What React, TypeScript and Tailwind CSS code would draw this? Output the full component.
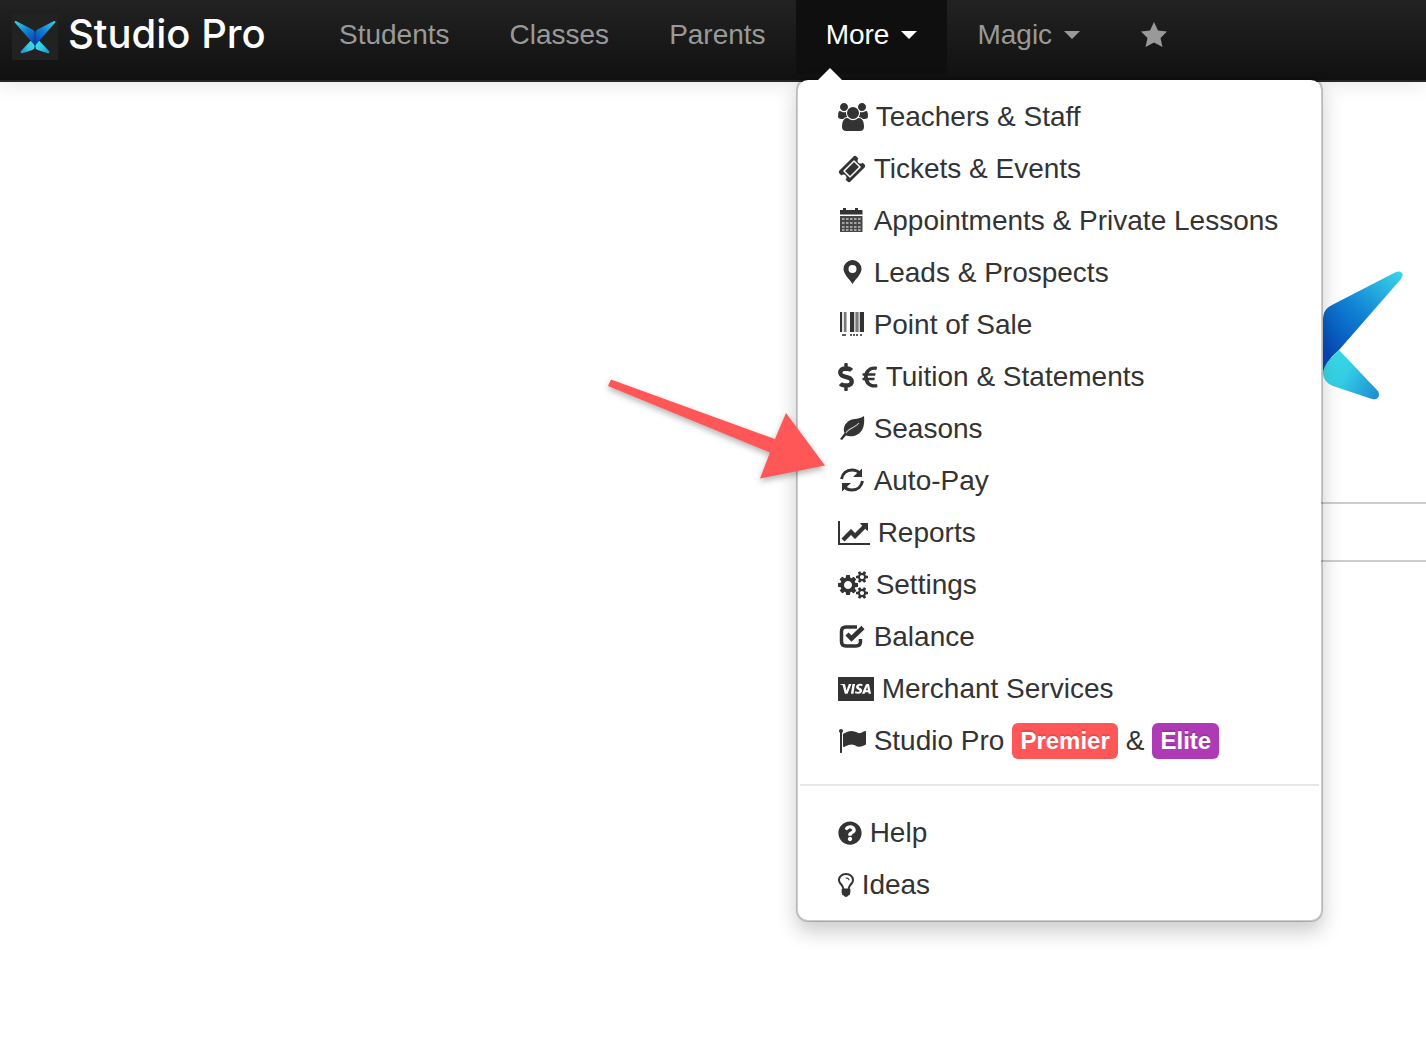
import type { ReactNode } from "react";
import { FaCcVisa, FaDollarSign, FaEuroSign, FaQuestionCircle } from "react-icons/fa";

function Glyph({ box, className, children }: { box: string; className: string; children: ReactNode }) {
  return (
    <svg viewBox={box} className={className} fill="currentColor" aria-hidden="true">
      {children}
    </svg>
  );
}

// Butterfly mark, used in the navbar and on the page itself
function Butterfly({ id, className }: { id: string; className: string }) {
  const wings = (
    <>
      <path
        d="M1 52C1 44 4 40 10 37L73 4.500Q77 2.500 79.500 4.500Q82 7 79 11L17 82Q2 94 1 108Z"
        fill={`url(#${id}-top)`}
      />
      <path
        d="M17 82L55 122Q58 125 56.500 129Q54.500 132 50 131L11 118Q1 114 1 104Q2 96 17 82Z"
        fill={`url(#${id}-bottom)`}
      />
    </>
  );
  return (
    <svg viewBox="-82 0 164 134" className={className} aria-hidden="true">
      <defs>
        <linearGradient id={`${id}-top`} gradientUnits="userSpaceOnUse" x1="6" y1="86" x2="80" y2="4">
          <stop offset="0" stopColor="#0648b8" />
          <stop offset="0.450" stopColor="#0f7fd2" />
          <stop offset="1" stopColor="#3bd6ea" />
        </linearGradient>
        <linearGradient id={`${id}-bottom`} gradientUnits="userSpaceOnUse" x1="10" y1="96" x2="60" y2="128">
          <stop offset="0" stopColor="#38d8e8" />
          <stop offset="0.300" stopColor="#34cce6" />
          <stop offset="1" stopColor="#1c86d0" />
        </linearGradient>
      </defs>
      {wings}
      <g transform="scale(-1 1)">{wings}</g>
    </svg>
  );
}

const smallCog =
  "M1664 1408q0-52-38-90t-90-38-90 38-38 90q0 53 37.500 90.500t90.500 37.500 90.500-37.500 37.500-90.500zm256-70v140q0 16-149 31-12 27-30 52 51 113 51 138 0 4-4 7-122 71-124 71-8 0-46-47t-52-68q-20 2-30 2t-30-2q-14 21-52 68t-46 47q-2 0-124-71-4-3-4-7 0-25 51-138-18-25-30-52-149-15-149-31v-140q0-16 149-31 13-29 30-52-51-113-51-138 0-4 4-7 4-2 35-20t59-34 30-16q8 0 46 46.500t52 67.500q20-2 30-2t30 2q51-71 92-112l6-2q4 0 124 70 4 3 4 7 0 25-51 138 17 23 30 52 149 15 149 31z";

const icons = {
  users: (
    <Glyph box="0 0 1920 1792" className="h-7 w-[30px]">
      <path d="M593 896q-162 5-265 128H194q-82 0-138-40.500T0 865q0-353 124-353 6 0 43.500 21t97.500 42.500T384 597q67 0 133-23-5 37-5 66 0 139 81 256zm1071 637q0 120-73 189.500t-194 69.500H523q-121 0-194-69.500T256 1533q0-53 3.500-103.500t14-109T300 1212t43-97.500 62-81 85.500-53.500T602 960q10 0 43 21.500t73 48 107 48 135 21.500 135-21.500 107-48 73-48 43-21.500q61 0 111.500 20t85.500 53.500 62 81 43 97.500 26.500 108.500 14 109 3.500 103.500zM640 256q0 106-75 181t-181 75-181-75-75-181 75-181T384 0t181 75 75 181zm704 384q0 159-112.500 271.500T960 1024 688.500 911.500 576 640t112.500-271.500T960 256t271.500 112.500T1344 640zm576 225q0 78-56 118.500t-138 40.500h-134q-103-123-265-128 81-117 81-256 0-29-5-66 66 23 133 23 59 0 119-21.500t97.500-42.500 43.500-21q124 0 124 353zm-128-609q0 106-75 181t-181 75-181-75-75-181 75-181 181-75 181 75 75 181z" />
    </Glyph>
  ),
  ticket: (
    <Glyph box="0 0 1792 1792" className="size-7">
      <path d="M1024 452l316 316-572 572-316-316zm-211 979l618-618q19-19 19-45t-19-45l-362-362q-18-18-45-18t-45 18L361 979q-19 19-19 45t19 45l362 362q18 18 45 18t45-18zm889-637l-907 908q-37 37-90.500 37t-90.500-37l-126-126q56-56 56-136t-56-136-136-56-136 56L91 1178q-37-37-37-90.500T91 997L998 91q37-37 90.500-37t90.500 37l125 125q-56 56-56 136t56 136 136 56 136-56l126 125q37 37 37 90.500t-37 90.500z" />
    </Glyph>
  ),
  calendar: (
    <Glyph box="0 0 28 28" className="size-7">
      <path d="M2 3h3V1h3v2h9V1h3v2h4.500v4.500H2z" />
      <path d="M2 9h22.500v16H2z" opacity="0.900" />
      <path
        d="M4 12h19M4 16h19M4 20h19M4 23h19"
        stroke="#fff"
        strokeWidth="2"
        strokeDasharray="2.500 1.500"
        opacity="0.500"
      />
    </Glyph>
  ),
  marker: (
    <Glyph box="0 0 28 28" className="size-7">
      <path
        fillRule="evenodd"
        d="M14.500 1a9 9 0 0 1 9 9c0 5-5 9-9 15c-4-6-9-10-9-15a9 9 0 0 1 9-9zm0 5a4 4 0 1 0 0 8 4 4 0 0 0 0-8z"
      />
    </Glyph>
  ),
  barcode: (
    <Glyph box="0 0 28 28" className="size-7">
      <path d="M2 1h2v20H2zM12 1h4v20h-4zM22 1h4v20h-4z" />
      <path d="M6 1h2.500v20H6zM17.500 1h3v20h-3z" opacity="0.650" />
      <path d="M4 23h4v2H4zM12 23h2v2h-2zM15 23h2v2h-2zM18 23h2v2h-2zM22 23h2v2h-2z" opacity="0.800" />
      <path d="M4.500 1h1v20h-1zM16 1h1.500v20H16zM20.500 1H22v20h-1.500z" opacity="0.250" />
    </Glyph>
  ),
  money: (
    <span className="flex items-center gap-2">
      <FaDollarSign className="h-7 w-4" />
      <FaEuroSign className="h-6 w-4" />
    </span>
  ),
  leaf: (
    <Glyph box="0 0 28 28" className="size-7">
      <path d="M26 1c.8 8-.5 14-5 17.500-4 3-9.500 3.500-13 2L4 25l-2-1 4.500-6C4.500 13.500 7 8 11.500 5.500 16 3 22 4.500 26 1z" />
      <path d="M8 18c2-4.500 9-5 13-10" stroke="#fff" strokeWidth="1.200" fill="none" opacity="0.700" />
    </Glyph>
  ),
  refresh: (
    <Glyph box="0 0 28 28" className="size-7">
      <path d="M3.500 12C4.500 6.500 8.500 3 14 3c4 0 6.500 1.500 8.500 4M24.500 14C23.500 19.500 19.500 23 14 23c-4 0-6.500-1.500-8.500-4" fill="none" stroke="currentColor" strokeWidth="3" />
      <path d="M24 1.500V10h-9zM4 24.500V16h9z" />
    </Glyph>
  ),
  chart: (
    <Glyph box="0 0 2048 1792" className="h-7 w-8">
      <path d="M2048 1536v128H0V128h128v1408h1920zM1920 288v435q0 21-19.500 29.500T1865 745l-121-121-633 633q-10 10-23 10t-23-10l-233-233-416 416-192-192 585-585q10-10 23-10t23 10l233 233 464-464-121-121q-16-16-7.500-35.500T1453 256h435q14 0 23 9t9 23z" />
    </Glyph>
  ),
  cogs: (
    <Glyph box="0 0 1920 1792" className="h-7 w-[30px]">
      <path d="M896 896q0-106-75-181t-181-75-181 75-75 181 75 181 181 75 181-75 75-181zm384-91v185q0 10-7 19.500t-16 10.500l-155 24q-11 35-32 76 34 48 90 115 7 11 7 20 0 12-7 19-23 30-82.500 89.500t-78.500 59.500q-11 0-21-7l-115-90q-37 19-77 31-11 108-23 155-7 24-30 24h-186q-11 0-20-7.500t-10-17.500l-23-153q-34-10-75-31l-118 89q-7 7-20 7-11 0-21-8-144-133-144-160 0-9 7-19 10-14 41-53t47-61q-23-44-35-82l-152-24q-10-1-17-9.500T0 987V802q0-10 7-19.500T23 772l155-24q11-35 32-76-34-48-90-115-7-11-7-20 0-12 7-20 22-30 82-89t79-59q11 0 21 7l115 90q34-18 77-32 11-108 23-154 7-24 30-24h186q11 0 20 7.500t10 17.500l23 153q34 10 75 31l118-89q8-7 20-7 11 0 21 8 144 133 144 160 0 8-7 19-12 16-42 54t-45 60q23 48 34 82l152 23q10 2 17 10.500t7 19.500z" />
      <path d={smallCog} />
      <path d={smallCog} transform="translate(0 -1024)" />
    </Glyph>
  ),
  check: (
    <Glyph box="0 0 28 28" className="size-7">
      <path d="M19 4H8Q3.500 4 3.500 8.500v10Q3.500 23 8 23h10q4.500 0 4.500-4.500V16" fill="none" stroke="currentColor" strokeWidth="3.500" />
      <path d="M9 11l4.500 4.500L25 4.500" fill="none" stroke="currentColor" strokeWidth="4.500" />
    </Glyph>
  ),
  flag: (
    <Glyph box="0 0 1792 1792" className="size-7">
      <path d="M320 256q0 72-64 110v1266q0 13-9.500 22.500T224 1664h-64q-13 0-22.500-9.500T128 1632V366q-64-38-64-110 0-53 37.500-90.500T192 128t90.500 37.500T320 256zm1472 64v763q0 25-12.500 38.500t-39.500 27.500q-215 116-369 116-61 0-123.500-22t-108.500-48-115.500-48-142.500-22q-192 0-464 146-17 9-33 9-26 0-45-19t-19-45V474q0-32 31-55 21-14 79-43 236-120 421-120 107 0 200 29t219 88q38 19 88 19 54 0 117.500-21t110-47 88-47 54.500-21q26 0 45 19t19 45z" />
    </Glyph>
  ),
  bulb: (
    <Glyph box="0 0 1024 1792" className="h-7 w-4">
      <path d="M736 576q0 13-9.500 22.500T704 608t-22.500-9.500T672 576q0-46-54-71t-106-25q-13 0-22.500-9.500T480 448t9.500-22.500T512 416q50 0 99.500 16t87 54 37.500 90zm160 0q0-72-34.500-134t-90-101.500-123-62T512 256t-136.500 22.500-123 62-90 101.500T128 576q0 101 68 180 10 11 30.500 33t30.500 33q128 153 141 298h228q13-145 141-298 10-11 30.500-33t30.500-33q68-79 68-180zm128 0q0 155-103 268-45 49-74.500 87t-59.500 95.500-34 107.500q47 28 47 82 0 37-25 64 25 27 25 64 0 52-45 81 13 23 13 47 0 46-31.500 71t-77.500 25q-20 44-60 70t-87 26-87-26-60-70q-46 0-77.500-25T256 1472q0-24 13-47-45-29-45-81 0-37 25-64-25-27-25-64 0-54 47-82-4-50-34-107.500T177.500 931 103 844Q0 731 0 576q0-99 44.500-184.500t117-142 164-89T512 128t186.500 32.500 164 89 117 142T1024 576z" />
    </Glyph>
  ),
};

const menuLinks = [
  { label: "Teachers & Staff", icon: icons.users },
  { label: "Tickets & Events", icon: icons.ticket },
  { label: "Appointments & Private Lessons", icon: icons.calendar },
  { label: "Leads & Prospects", icon: icons.marker },
  { label: "Point of Sale", icon: icons.barcode },
  { label: "Tuition & Statements", icon: icons.money },
  { label: "Seasons", icon: icons.leaf },
  { label: "Auto-Pay", icon: icons.refresh },
  { label: "Reports", icon: icons.chart },
  { label: "Settings", icon: icons.cogs },
  { label: "Balance", icon: icons.check },
  { label: "Merchant Services", icon: <FaCcVisa className="h-6 w-9" preserveAspectRatio="xMidYMid slice" /> },
];

const helpLinks = [
  { label: "Help", icon: <FaQuestionCircle className="size-6" /> },
  { label: "Ideas", icon: icons.bulb },
];

const badge = "rounded-md px-2 py-1 text-2xl leading-7 font-bold text-white text-shadow-[0_-2px_0_rgba(0,0,0,0.15)]";

function MenuItem({ icon, children }: { icon: ReactNode; children: ReactNode }) {
  return (
    <li>
      <a href="#" className="flex items-center gap-2 px-10 pt-[7px] pb-[5px] leading-10 whitespace-nowrap text-[#333] hover:bg-neutral-100">
        {icon}
        {children}
      </a>
    </li>
  );
}

function MoreMenu() {
  return (
    <div className="absolute top-[78px] left-0 z-20 w-[527px] rounded-xl border-2 border-black/20 bg-white bg-clip-padding py-2.5 shadow-[0_10px_20px_rgba(0,0,0,0.2)]">
      <svg viewBox="0 0 24 12" className="absolute -top-3 left-5 h-3 w-6" aria-hidden="true">
        <path d="M0 12L12 0l12 12z" fill="#fff" />
      </svg>
      <ul>
        {menuLinks.map((link) => (
          <MenuItem key={link.label} icon={link.icon}>
            {link.label}
          </MenuItem>
        ))}
        <MenuItem icon={icons.flag}>
          <span>Studio Pro</span>
          <span className={`${badge} bg-[#ff5757]`}>Premier</span>
          <span>&amp;</span>
          <span className={`${badge} bg-[#ae3bb5]`}>Elite</span>
        </MenuItem>
      </ul>
      <hr className="mx-0.5 mt-[18px] mb-5 border-t-2 border-[#e5e5e5]" />
      <ul>
        {helpLinks.map((link) => (
          <MenuItem key={link.label} icon={link.icon}>
            {link.label}
          </MenuItem>
        ))}
      </ul>
    </div>
  );
}

function Caret() {
  return <span className="border-x-8 border-t-8 border-x-transparent border-t-current" />;
}

const navItem = "flex items-center gap-3 px-[30px] pt-[15px] pb-[19px] leading-10";

export default function App() {
  return (
    <div className="relative min-h-screen overflow-hidden bg-white font-['Liberation_Sans',Arial,sans-serif] text-[28px] text-[#333]">
      <header className="relative z-10 flex border-b-2 border-[#252525] bg-linear-to-b from-[#222] to-[#111] pb-1.5 pl-3 shadow-[0_2px_20px_rgba(0,0,0,0.1)]">
        <a href="#" className="mr-[41px] flex w-64 shrink-0 items-start gap-2.5 pt-3.5 text-white">
          <span className="flex size-[46px] shrink-0 items-center justify-center bg-[#222]">
            <Butterfly id="brand" className="h-[34px] w-[42px]" />
          </span>
          <span className="font-['Inter',sans-serif] text-[40px] leading-10 font-medium whitespace-nowrap">Studio Pro</span>
        </a>
        <nav>
          <ul className="flex text-[#999]">
            {["Students", "Classes", "Parents"].map((label) => (
              <li key={label}>
                <a href="#" className={`${navItem} hover:text-white`}>
                  {label}
                </a>
              </li>
            ))}
            <li className="relative">
              <button type="button" aria-expanded="true" className={`${navItem} bg-[#0f0f0f] text-white`}>
                More <Caret />
              </button>
              <MoreMenu />
            </li>
            <li>
              <button type="button" aria-expanded="false" className={`${navItem} hover:text-white`}>
                Magic <Caret />
              </button>
            </li>
            <li>
              <a href="#" aria-label="Favorites" className={`${navItem} h-full hover:text-white`}>
                <Glyph box="0 0 28 28" className="size-7">
                  <path d="M14 1l4 8.500 9 1-6.500 6.500 2 9L14 21.500 5.500 26l2-9L1 10.500l9-1z" />
                </Glyph>
              </a>
            </li>
          </ul>
        </nav>
      </header>

      <main className="flex justify-end pt-[186px]">
        <section className="w-[186px]">
          <Butterfly id="hero" className="h-[134px] w-[164px]" />
          <div className="mt-[100px] h-[60px] border-y-2 border-[#ccc]" />
        </section>
      </main>

      {/* callout arrow pointing at Auto-Pay */}
      <svg
        viewBox="0 0 240 120"
        className="pointer-events-none absolute top-[370px] left-[600px] z-30 h-[120px] w-60 drop-shadow-[0_3px_3px_rgba(0,0,0,0.3)]"
        aria-hidden="true"
      >
        <path d="M11 9.500L175 69L186 43L225 95.500L160 108.500L170 82.500L8 16z" fill="#ff5757" />
      </svg>
    </div>
  );
}
